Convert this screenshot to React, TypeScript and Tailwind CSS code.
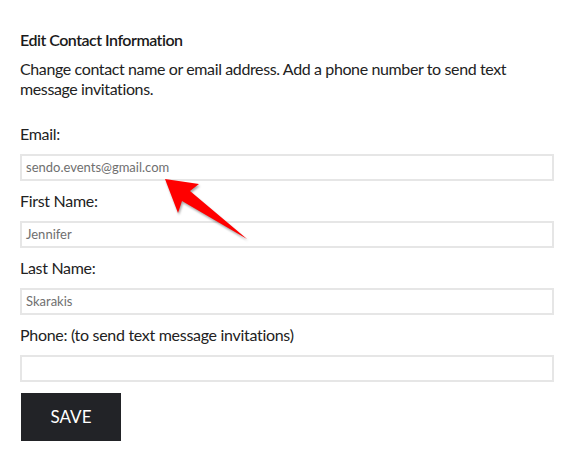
import React from "react";

function Field({ label, value }: { label: string; value: string }) {
  return (
    <div className="flex flex-col">
      <label className="h-[20px] text-[16px] leading-[20px] tracking-[-0.3px] text-[#222]">{label}</label>
      <div className="mt-[10px] h-[27px] w-[534px] border-2 border-[#e6e6e6] bg-white flex items-center px-[4px]">
        <span className="text-[13px] text-[#6f6f6f] leading-none">{value}</span>
      </div>
    </div>
  );
}

export default function App() {
  return (
    <div
      className="relative w-[574px] h-[471px] bg-white pl-[20px] pt-[30px]"
      style={{ fontFamily: "Lato, 'Open Sans', sans-serif" }}
    >
      <h2 className="text-[16px] leading-[20px] font-semibold tracking-[-0.5px] text-[#1a1a1a]">Edit Contact Information</h2>
      <p className="mt-[9px] w-[534px] text-[16px] leading-[20px] tracking-[-0.38px] text-[#222]">
        Change contact name or email address. Add a phone number to send text message invitations.
      </p>
      <div className="mt-[25px] flex flex-col gap-[10px]">
        <Field label="Email:" value="sendo.events@gmail.com" />
        <Field label="First Name:" value="Jennifer" />
        <Field label="Last Name:" value="Skarakis" />
        <Field label="Phone: (to send text message invitations)" value="" />
      </div>
      <button className="mt-[11px] ml-px w-[100px] h-[48px] bg-[#222327] text-white text-[17px] flex items-center justify-center">
        SAVE
      </button>
      <svg
        className="absolute left-0 top-0 pointer-events-none"
        width="574"
        height="471"
        viewBox="0 0 574 471"
        style={{ filter: "drop-shadow(1px 2px 1px rgba(0,0,0,0.35))" }}
      >
        <polygon
          points="165,179 199,184 190,191 247,239 182,201 178,213"
          fill="#ff0000"
        />
      </svg>
    </div>
  );
}
